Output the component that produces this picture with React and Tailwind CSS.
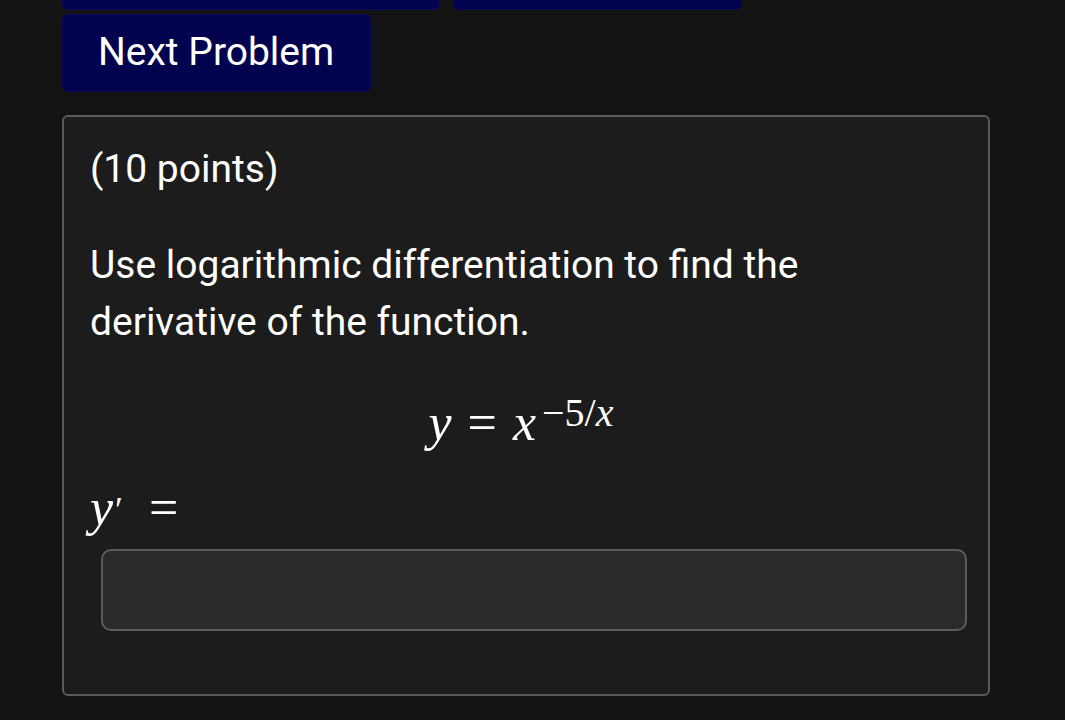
export default function App() {
  return (
    <div className="min-h-[720px] w-full bg-[#131313] overflow-hidden" style={{ fontFamily: 'Roboto, "Noto Sans", sans-serif' }}>
      <div className="pl-[62px] pr-[76px]">
        {/* buttons cut off at the top */}
        <div className="flex gap-[13px] -mt-[50px]">
          <div className="h-[60px] w-[378px] rounded-[6px] bg-[#02024f] border border-[#0b0b5c]" />
          <div className="h-[60px] w-[289px] rounded-[6px] bg-[#02024f] border border-[#0b0b5c]" />
        </div>

        <button className="mt-[4px] h-[78px] w-[309px] rounded-[6px] bg-[#02024f] border border-[#0b0b5c] text-white text-[39px] text-left pl-[35px] pb-[2px]">
          Next Problem
        </button>

        <div className="mt-[23px] h-[581px] w-[928px] rounded-[6px] border-2 border-[#5a5a5a] bg-[#1c1c1c] pl-[26px] pr-[70px] pt-[24px] text-white">
          <p className="text-[39px] leading-[57px]">(10 points)</p>
          <p className="mt-[39px] text-[39px] leading-[57px]">
            Use logarithmic differentiation to find the derivative of the function.
          </p>

          <div className="mt-[40px] flex justify-center pl-[34px]" style={{ fontFamily: '"Liberation Serif", "DejaVu Serif", serif' }}>
            <span className="text-[52px] leading-[64px] whitespace-nowrap">
              <i>y</i>
              <span className="mx-[16px]">=</span>
              <i>x</i>
              <sup className="text-[40px] ml-[6px] relative -top-[14px]">
                <span>−5/</span><i>x</i>
              </sup>
            </span>
          </div>

          <div className="mt-[24px] text-[52px] leading-[58px] whitespace-nowrap" style={{ fontFamily: '"Liberation Serif", "DejaVu Serif", serif' }}>
            <i>y</i><span className="text-[36px] align-top relative top-[2px] ml-[2px]">′</span>
            <span className="ml-[26px]">=</span>
          </div>

          <div className="mt-[12px] ml-[11px] h-[82px] w-[866px] rounded-[10px] border-2 border-[#5c5c5c] bg-[#2a2a2a]" />
        </div>
      </div>
    </div>
  );
}
